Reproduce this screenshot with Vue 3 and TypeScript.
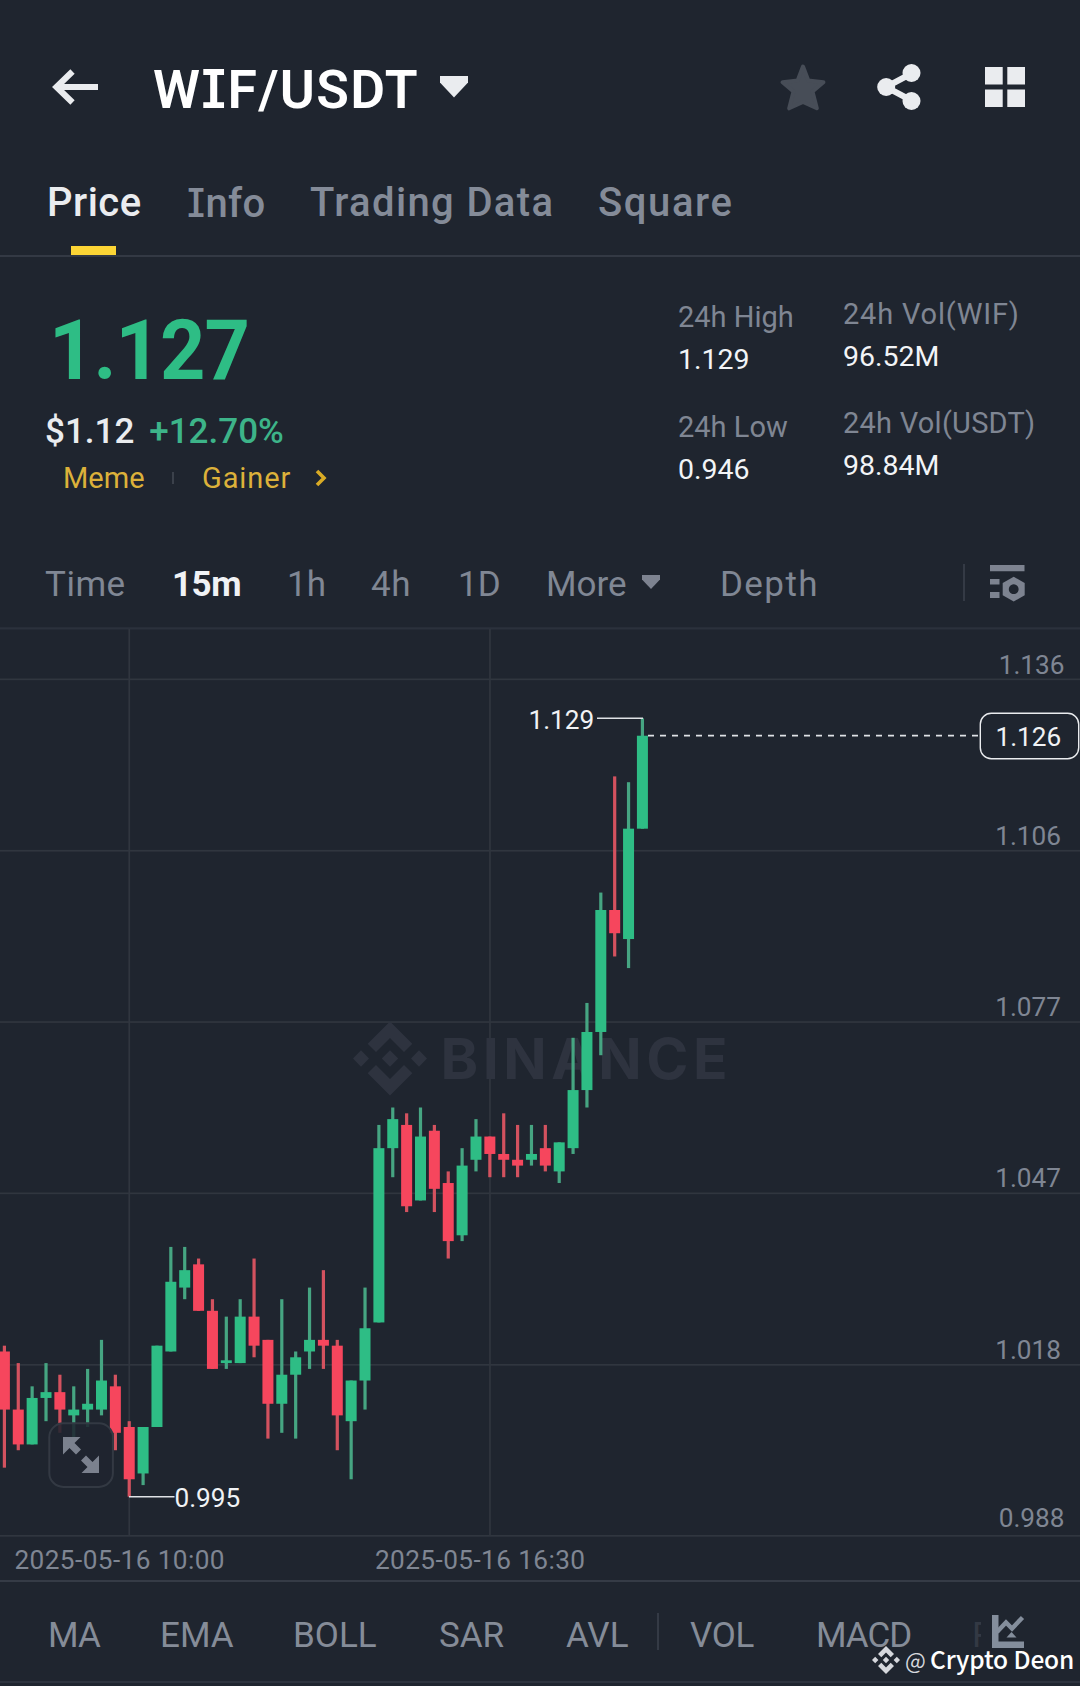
<script setup lang="ts">
interface Item { label: string; width: number; active?: boolean; spacing?: number }
type Candle = [open: number, high: number, low: number, close: number]

const tabs: Item[] = [
  { label: 'Price', width: 140, active: true, spacing: 0.5 },
  { label: 'Info', width: 123, spacing: 0.3 },
  { label: 'Trading Data', width: 288, spacing: 1.35 },
  { label: 'Square', width: 150, spacing: 1.6 },
]

const statColumns = [
  [
    { label: '24h High', value: '1.129' },
    { label: '24h Low', value: '0.946' },
  ],
  [
    { label: '24h Vol(WIF)', value: '96.52M' },
    { label: '24h Vol(USDT)', value: '98.84M' },
  ],
]

const intervals: Item[] = [
  { label: 'Time', width: 127, spacing: 0.5 },
  { label: '15m', width: 115, active: true, spacing: -0.5 },
  { label: '1h', width: 84 },
  { label: '4h', width: 87, spacing: 0.6 },
  { label: '1D', width: 88 },
]

const overlays: Item[] = [
  { label: 'MA', width: 112, spacing: -0.8 },
  { label: 'EMA', width: 133 },
  { label: 'BOLL', width: 146 },
  { label: 'SAR', width: 127 },
  { label: 'AVL', width: 91 },
]
const oscillators: Item[] = [
  { label: 'VOL', width: 126, spacing: -0.3 },
  { label: 'MACD', width: 155, spacing: -1 },
]

// Prices in thousandths of a USDT.
const candles: Candle[] = [
  [1020, 1021, 1000, 1010], [1010, 1018, 1003, 1004], [1004, 1014, 1004, 1012],
  [1012, 1018, 1008, 1013], [1013, 1016, 1006, 1010], [1009, 1014, 1005, 1010],
  [1010, 1017, 1007, 1011], [1010, 1022, 1009, 1015], [1014, 1016, 1003, 1006],
  [1007, 1008, 995, 998], [999, 1007, 997, 1007], [1007, 1021, 1007, 1021],
  [1020, 1038, 1020, 1032], [1031, 1038, 1029, 1034], [1035, 1036, 1027, 1027],
  [1027, 1029, 1017, 1017], [1018, 1026, 1017, 1018], [1018, 1029, 1018, 1026],
  [1026, 1036, 1019, 1021], [1022, 1022, 1005, 1011], [1011, 1029, 1006, 1016],
  [1016, 1020, 1005, 1019], [1020, 1031, 1017, 1022], [1022, 1034, 1017, 1021],
  [1021, 1022, 1003, 1009], [1008, 1015, 998, 1015], [1015, 1031, 1010, 1024],
  [1025, 1059, 1025, 1055], [1055, 1062, 1050, 1060], [1059, 1061, 1044, 1045],
  [1046, 1062, 1046, 1057], [1058, 1059, 1044, 1048], [1049, 1051, 1036, 1039],
  [1040, 1055, 1039, 1052], [1053, 1060, 1051, 1057], [1057, 1057, 1050, 1054],
  [1054, 1061, 1050, 1053], [1053, 1059, 1050, 1052], [1053, 1059, 1052, 1054],
  [1055, 1059, 1051, 1052], [1051, 1056, 1049, 1056], [1055, 1074, 1054, 1065],
  [1065, 1080, 1062, 1075], [1075, 1099, 1071, 1096], [1096, 1119, 1088, 1092],
  [1091, 1118, 1086, 1110], [1110, 1129, 1110, 1126],
]

const xOf = (i: number) => 4.4 + i * 13.87
const yOf = (price: number) => 718.3 + (1129 - price) * 5.809

const bars = candles.map(([open, high, low, close], i) => {
  const bottom = yOf(Math.min(open, close))
  const height = Math.max(bottom - yOf(Math.max(open, close)), 2.8)
  return {
    x: xOf(i),
    fill: close >= open ? '#2ebd85' : '#f6465d',
    wick: close >= open ? '#46a582' : '#d3525f',
    wickTop: yOf(high),
    wickHeight: yOf(low) - yOf(high),
    top: bottom - height,
    height,
  }
})

const priceAxis = [
  { label: '1.136', x: 1064.5, line: 679.3, y: 674 },
  { label: '1.106', x: 1061, line: 850.7, y: 845 },
  { label: '1.077', x: 1061, line: 1022, y: 1016 },
  { label: '1.047', x: 1061, line: 1193.3, y: 1187 },
  { label: '1.018', x: 1061, line: 1364.8, y: 1358.5 },
  { label: '0.988', x: 1064.5, line: 1535.8, y: 1526.5 },
]
const timeAxis = [
  { label: '2025-05-16 10:00', line: 129.2, x: 14.5 },
  { label: '2025-05-16 16:30', line: 489.9, x: 375 },
]
</script>

<template>
  <main class="screen">
    <header class="topbar">
      <svg class="back" width="46" height="36" viewBox="0 0 46 36">
        <path d="M20.5 2.5 4.5 18l16 15.5M4.5 18H46" fill="none" stroke="#eaecef" stroke-width="6.2" />
      </svg>
      <h1 class="pair">W<span class="slab">I</span>F/USDT</h1>
      <svg class="pair-caret" width="28" height="22" viewBox="0 0 28 22">
        <path d="M0 0h28v6.5L14 21.5 0 6.5z" fill="#eaecef" />
      </svg>
      <div class="actions">
        <svg width="46" height="48" viewBox="0 0 46 48">
          <path d="M23 3.500 28.300 17.500l15.100 1.700L32.500 28.500l4.300 16.800L23 39 9.200 45.300l4.300-16.800L2.600 19.200l15.100-1.700z" fill="#474d57" stroke="#474d57" stroke-width="4" stroke-linejoin="round" />
        </svg>
        <svg width="44" height="48" viewBox="0 0 44 48" fill="#eaecef">
          <path d="M34.5 10.5 9 24l25.5 13.5" fill="none" stroke="#eaecef" stroke-width="6" />
          <circle cx="34.5" cy="10" r="9" /><circle cx="9.2" cy="24" r="9" /><circle cx="34.5" cy="38" r="9" />
        </svg>
        <svg width="40" height="40" viewBox="0 0 40 40" fill="#eaecef">
          <path d="M0 0h17.7v17.5H0zM22.3 0H40v17.5H22.3zM0 22.5h17.7V40H0zM22.3 22.5H40V40H22.3z" />
        </svg>
      </div>
    </header>

    <nav class="tabs">
      <div v-for="tab in tabs" :key="tab.label" class="tab" :class="{ active: tab.active }" :style="{ width: tab.width + 'px', letterSpacing: (tab.spacing ?? 0) + 'px' }">
        <span v-if="tab.label === 'Info'"><span class="slab">I</span>nfo</span>
        <span v-else>{{ tab.label }}</span>
        <i v-if="tab.active" class="tab-mark"></i>
      </div>
    </nav>

    <section class="ticker">
      <div class="quote">
        <div class="last">1.127</div>
        <div class="change"><span>$1.12</span><span class="up">+12.70%</span></div>
        <div class="tags">
          <span class="meme">Meme</span><i></i><span class="gainer">Gainer</span>
          <svg width="12" height="18" viewBox="0 0 12 18"><path d="M2 2l7 7-7 7" fill="none" stroke="#d9ab25" stroke-width="3.6" /></svg>
        </div>
      </div>
      <dl v-for="(column, c) in statColumns" :key="c" class="stats">
        <template v-for="stat in column" :key="stat.label">
          <dt>{{ stat.label }}</dt>
          <dd>{{ stat.value }}</dd>
        </template>
      </dl>
    </section>

    <nav class="intervals">
      <span v-for="item in intervals" :key="item.label" :class="{ active: item.active }" :style="{ width: item.width + 'px', letterSpacing: (item.spacing ?? 0) + 'px' }">{{ item.label }}</span>
      <span class="more">More</span>
      <svg class="more-caret" width="18" height="14" viewBox="0 0 18 14"><path d="M0 0h18v4.5L9 14 0 4.5z" fill="#7d8390" /></svg>
      <span class="depth">Depth</span>
      <i class="rule"></i>
      <svg class="settings" width="35" height="37" viewBox="0 0 35 37" fill="#7d8390">
        <path d="M0 0h34.5v6.3H0zM0 14h9.5v5.5H0zM0 27h9.5v6H0z" />
        <path fill-rule="evenodd" d="M23.7 11.8 34.7 18v12.200L23.700 36.500 12.700 30.200V18zM23.700 19.300a4.900 4.900 0 1 0 .01 0z" />
      </svg>
    </nav>

    <svg class="chart" width="1080" height="953" viewBox="0 627 1080 953">
      <rect x="0" y="627.300" width="1080" height="2.200" fill="#2b313c" />
      <g fill="#30363f">
        <rect v-for="row in priceAxis" :key="row.label" x="0" :y="row.line - 0.8" width="1080" height="1.700" />
        <rect v-for="col in timeAxis" :key="col.label" :x="col.line - 0.8" y="629" width="1.700" height="907" />
      </g>

      <g fill="#2e333f">
        <path d="M390 1021.500 412.300 1043.800 404 1052 390 1038 376 1052 367.700 1043.800zM390 1095.500 412.300 1073.200 404 1065 390 1079 376 1065 367.700 1073.200zM361 1050.200l8 8.300-8 8.300-8-8.300zM419 1050.200l8 8.300-8 8.300-8-8.300zM390 1050.200l8.200 8.300-8.200 8.300-8.200-8.300z" />
        <text x="440.500" y="1079" class="brand" textLength="287">BINANCE</text>
      </g>

      <g v-for="(bar, i) in bars" :key="i">
        <rect :x="bar.x - 1.6" :y="bar.wickTop" width="3.200" :height="bar.wickHeight" :fill="bar.wick" />
        <rect :x="bar.x - 5.5" :y="bar.top" width="11" :height="bar.height" :fill="bar.fill" />
      </g>

      <g class="axis">
        <text v-for="row in priceAxis" :key="row.label" :x="row.x" :y="row.y" text-anchor="end">{{ row.label }}</text>
        <text v-for="col in timeAxis" :key="col.label" :x="col.x" y="1569" textLength="210">{{ col.label }}</text>
      </g>

      <g class="marks">
        <path d="M597 718.300h46M129 1496.700h45.500" stroke="#dfe2e6" stroke-width="1.600" />
        <path d="M648 735.700h332" stroke="#dfe2e6" stroke-width="1.700" stroke-dasharray="6 6" />
        <text x="528.500" y="728.700">1.129</text>
        <text x="174.500" y="1507.300">0.995</text>
        <rect x="980.300" y="713.300" width="98.400" height="45.400" rx="11" fill="#1f252f" stroke="#eaecef" stroke-width="1.400" />
        <text x="995.500" y="745.800">1.126</text>
      </g>

      <rect x="49.300" y="1423.300" width="63.600" height="63.600" rx="14" fill="#1f252f" fill-opacity=".87" stroke="#333943" stroke-width="2" />
      <path d="M63 1437h17.500l-6 6 6.500 6.500-5 5-6.500-6.500-6.500 6.500zM99 1473H81.500l6-6-6.500-6.500 5-5 6.500 6.500 6.500-6.500z" fill="#7b818e" />
    </svg>

    <footer class="indicators">
      <span v-for="item in overlays" :key="item.label" :style="{ width: item.width + 'px', letterSpacing: (item.spacing ?? 0) + 'px' }">{{ item.label }}</span>
      <i class="rule"></i>
      <span v-for="item in oscillators" :key="item.label" :style="{ width: item.width + 'px', letterSpacing: (item.spacing ?? 0) + 'px' }">{{ item.label }}</span>
      <span class="faded">R</span>
      <svg class="draw" width="33" height="33" viewBox="0 0 33 33">
        <path d="M0 0h6.500v26.500H32V33H0z" fill="#848e9c" />
        <path d="M5 17l9-9.500 6 6L30.500 2.500" fill="none" stroke="#848e9c" stroke-width="4.400" />
        <path d="M19.500 17l5 5.500h-10z" fill="#848e9c" />
      </svg>
    </footer>

    <div class="credit">
      <svg width="28" height="28" viewBox="0 0 28 28" fill="#d5d7dc">
        <path d="M14 0 22 8l-3.300 3.200L14 6.500l-4.700 4.700L6 8zM14 28l8-8-3.300-3.200L14 21.500l-4.700-4.700L6 20zM3.200 10.800 6.400 14l-3.200 3.200L0 14zM24.800 10.800 28 14l-3.200 3.200-3.200-3.200zM14 10.800l3.200 3.200-3.200 3.200-3.200-3.200z" />
      </svg>
      <span class="at">@</span><span class="author">Crypto Deon</span>
    </div>
  </main>
</template>

<style>
body { background: #1f252f; }
</style>

<style scoped>
.screen {
  position: relative;
  width: 1080px;
  height: 1686px;
  overflow: hidden;
  background: #1f252f;
  color: #eaecef;
  font-family: Roboto, "Liberation Sans", sans-serif;
  white-space: nowrap;
}
.slab { font-family: Inter, sans-serif; font-feature-settings: "cv08"; }
.topbar {
  box-sizing: border-box;
  display: flex;
  align-items: center;
  height: 174px;
  padding: 0 55px 0 52px;
}
.pair {
  width: 266px;
  margin: 4px 0 0 55px;
  color: #fff;
  font-size: 53.5px;
  font-weight: 600;
  line-height: 60px;
  letter-spacing: 1.3px;
}
.pair-caret { margin-left: 21px; }
.actions { display: flex; align-items: center; margin-left: auto; }
.actions svg + svg { margin-left: 51px; }
.actions svg + svg + svg { margin-left: 64px; }
.tabs {
  box-sizing: border-box;
  display: flex;
  height: 83px;
  padding: 1px 0 0 47px;
  border-bottom: 2px solid #333944;
  color: #848b98;
  font-size: 40px;
  font-weight: 500;
  line-height: 55px;
}
.tab.active { color: #eaecef; }
.tab-mark {
  display: block;
  width: 45px;
  height: 9px;
  margin: 16px 0 0 24px;
  background: #fcd535;
}
.ticker { display: flex; height: 283px; }
.quote { width: 678px; }
.last {
  margin: 53px 0 0 49px;
  color: #2ebd85;
  font-size: 82.500px;
  font-weight: 700;
  line-height: 82px;
  letter-spacing: -1px;
  transform: scaleX(.96);
  transform-origin: 0 50%;
}
.change {
  display: flex;
  gap: 15px;
  margin: 20px 0 0 45px;
  font-size: 35px;
  font-weight: 500;
  line-height: 40px;
}
.up { color: #3db489; }
.tags {
  display: flex;
  align-items: center;
  margin: 11px 0 0 63px;
  color: #dcb13a;
  font-size: 29px;
  line-height: 30px;
}
.meme { width: 109px; }
.tags i { width: 2px; height: 12px; background: #3b414b; }
.gainer { width: 113px; margin-left: 28px; letter-spacing: .9px; }
.stats { width: 165px; margin: 44.500px 0 0; font-size: 29px; line-height: 30px; }
.stats + .stats { margin-top: 42px; letter-spacing: .25px; }
.stats dt { color: #7f8693; }
.stats dd { margin: 13px 0 37px; font-size: 28.500px; color: #f2f4f7; letter-spacing: 0; }
.stats + .stats dd { margin-bottom: 36px; }
.stats + .stats dt:first-child { letter-spacing: .8px; }
.intervals {
  display: flex;
  align-items: center;
  height: 87px;
  padding: 2px 0 0 45px;
  box-sizing: border-box;
  color: #808794;
  font-size: 35px;
}
.intervals .active { color: #f0f2f5; font-weight: 700; }
.more { width: 96px; }
.more-caret { margin-top: -5px; }
.depth { width: 243px; margin-left: 60px; letter-spacing: 1.4px; }
.rule { width: 2px; height: 37px; background: #343a45; }
.intervals .rule { margin-top: -4px; }
.settings { margin: -3px 0 0 25px; }
.chart { display: block; }
.brand { font-family: Inter, sans-serif; font-size: 57px; font-weight: 700; }
.axis { fill: #7f8693; font-size: 26.200px; }
.marks text { fill: #f0f2f5; font-size: 26.200px; }
.indicators {
  box-sizing: border-box;
  display: flex;
  align-items: center;
  height: 103px;
  padding: 7px 0 0 48px;
  border-top: 2px solid #353b46;
  border-bottom: 2px solid #2d333e;
  color: #858c98;
  font-size: 35px;
}
.indicators .rule { margin: -8px 31px 0 0; }
.faded { width: 9px; margin-left: 1px; overflow: hidden; opacity: .2; }
.draw { margin: -8px 0 0 11px; }
.credit {
  position: absolute;
  left: 872px;
  top: 1640px;
  display: flex;
  align-items: center;
  height: 40px;
  font-family: "Noto Sans CJK SC", "Noto Sans", sans-serif;
  font-size: 24.500px;
  color: #fff;
}
.at { width: 25px; margin: -3px 0 0 5px; color: #d5d7dc; font-size: 22px; }
.author { margin-top: -3px; font-weight: 500; letter-spacing: -.15px; }
</style>
